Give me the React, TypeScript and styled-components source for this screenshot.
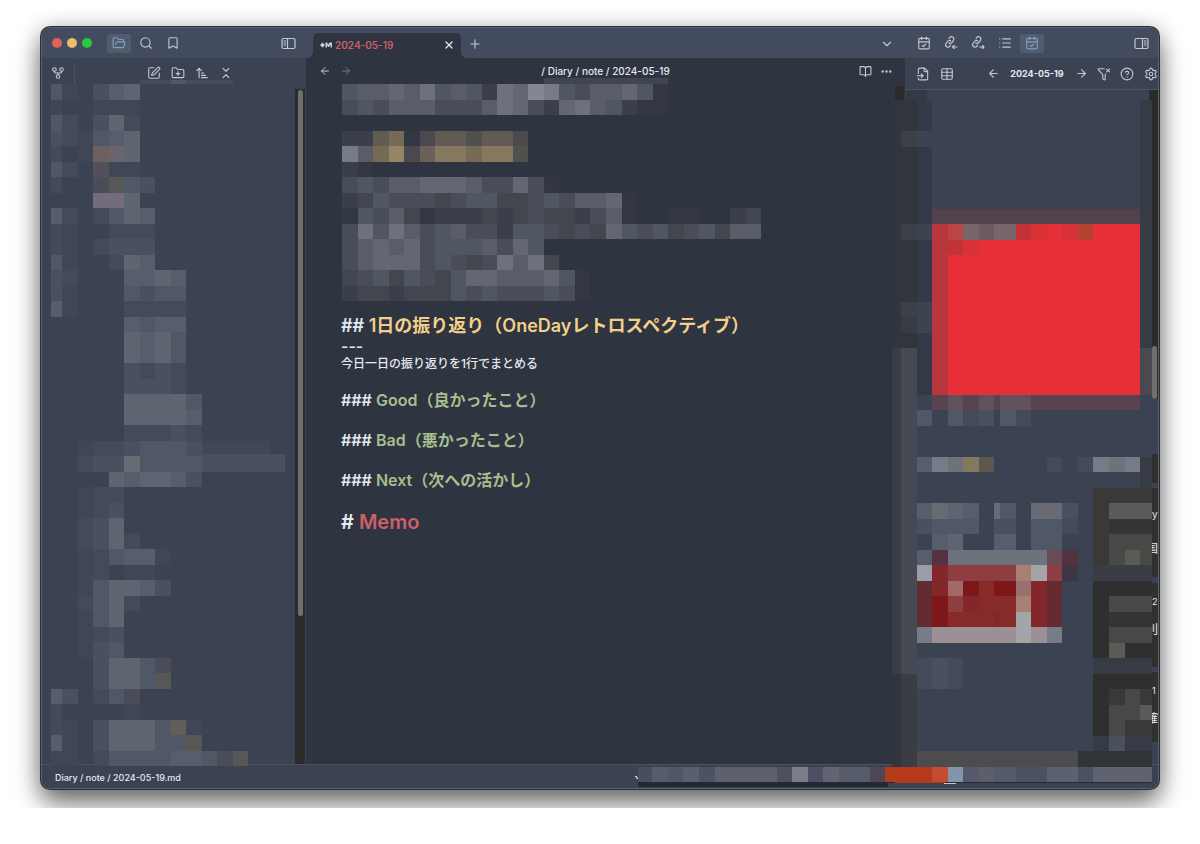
import React from "react";
import styled, { createGlobalStyle, css } from "styled-components";
import {
  ArrowLeft,
  ArrowRight,
  ArrowUpNarrowWide,
  Bookmark,
  BookOpen,
  CalendarCheck,
  ChevronDown,
  ChevronsDownUp,
  CircleHelp,
  Ellipsis,
  FileInput,
  FilterX,
  FolderOpen,
  FolderPlus,
  GitFork,
  List,
  Plus,
  Search,
  Settings,
  SquarePen,
  Table,
  X,
} from "lucide-react";

const color = {
  bar: "#434c5e",
  panel: "#3b4252",
  editor: "#2e3440",
  line: "#4a5265",
  text: "#e5e9f0",
  icon: "#c3c8d1",
  accent: "#81a1c1",
  red: "#cd6069",
  yellow: "#f2d08a",
  green: "#a6bf8e",
  track: "#2b2b29",
  thumb: "#6e6f6f",
};

const GlobalStyle = createGlobalStyle`
  * { box-sizing: border-box; }
  body {
    margin: 0;
    background: #fff;
    color: ${color.text};
    font-family: Inter, "Noto Sans CJK JP", sans-serif;
    font-size: 12px;
  }
`;

/* ---------- window frame ---------- */

const Stage = styled.div`
  display: flex;
  height: calc(100vh - 36px);
  min-height: 600px;
  padding: 27px 41px 19px;
  overflow: hidden;
`;

const Window = styled.div`
  display: flex;
  flex: 1;
  flex-direction: column;
  min-width: 0;
  overflow: hidden;
  border: 1px solid #596174;
  border-radius: 9px;
  background: ${color.panel};
  box-shadow:
    0 0 0 1px #2b2e36,
    0 14px 26px rgba(0, 0, 0, 0.55),
    0 0 22px rgba(0, 0, 0, 0.2);
`;

const Body = styled.div`
  display: grid;
  flex: 1;
  grid-template-columns: 264px 1fr 253px;
  min-height: 0;
`;

const Pane = styled.section<{ $side?: "left" | "right" }>`
  display: flex;
  position: relative;
  flex-direction: column;
  min-width: 0;
  min-height: 0;
  background: ${(p) => (p.$side ? color.panel : color.editor)};
  ${(p) => p.$side === "right" && css`z-index: 1;`}
`;

const Header = styled.header<{ $left: number; $right: number }>`
  display: flex;
  align-items: center;
  flex: none;
  gap: 3px;
  height: 30px;
  padding: 0 ${(p) => p.$right}px 0 ${(p) => p.$left}px;
  background: ${color.bar};
`;

const Toolbar = styled.div<{ $height: number; $left: number; $right: number }>`
  display: flex;
  align-items: center;
  flex: none;
  height: ${(p) => p.$height}px;
  padding: 0 ${(p) => p.$right}px 0 ${(p) => p.$left}px;
`;

const Spacer = styled.div`
  flex: 1;
`;

const IconButton = styled.button<{ $active?: boolean; $dim?: boolean; $w?: number }>`
  display: flex;
  align-items: center;
  justify-content: center;
  flex: none;
  width: ${(p) => p.$w ?? 24}px;
  height: 19px;
  padding: 0;
  border: 0;
  border-radius: 3px;
  background: ${(p) => (p.$active ? "#535c6c" : "transparent")};
  color: ${(p) => (p.$active ? color.accent : color.icon)};
  opacity: ${(p) => (p.$dim ? 0.5 : 1)};
`;

const Lights = styled.div`
  display: flex;
  gap: 5px;
  margin-right: 12px;
`;

const Light = styled.button<{ $fill: string }>`
  width: 10px;
  height: 10px;
  padding: 0;
  border: 0;
  border-radius: 50%;
  background: ${(p) => p.$fill};
`;

const Divider = styled.div`
  width: 1px;
  height: 22px;
  margin: 0 67px 0 4px;
  background: ${color.line};
`;

/* ---------- tabs ---------- */

const TabBar = styled(Header)`
  align-items: flex-end;
  gap: 0;
`;

const Tab = styled.div`
  display: flex;
  position: relative;
  align-items: center;
  width: 148px;
  height: 25px;
  padding: 0 6px 2px 7px;
  border-radius: 5px 5px 0 0;
  background: ${color.editor};
  color: ${color.red};
  font-size: 10px;
  font-weight: 600;

  &::before,
  &::after {
    content: "";
    position: absolute;
    bottom: 0;
    width: 6px;
    height: 6px;
  }
  &::before {
    left: -6px;
    background: radial-gradient(circle at 0 0, transparent 6px, ${color.editor} 6px);
  }
  &::after {
    right: -6px;
    background: radial-gradient(circle at 100% 0, transparent 6px, ${color.editor} 6px);
  }
`;

const TabIcon = styled.svg`
  margin-right: 3px;
`;

const TabSlot = styled.div`
  display: flex;
  align-items: center;
  height: 28px;
  padding-left: 2px;
`;

const Crumbs = styled.div`
  flex: 1;
  text-align: center;
  font-size: 10px;
  font-weight: 500;
  white-space: pre;
`;

const DayNav = styled.nav`
  display: flex;
  align-items: center;
  flex: none;
  margin-left: 22px;
`;

const DateLabel = styled.span`
  width: 60px;
  margin: 0 2px;
  text-align: center;
  font-size: 9px;
  font-weight: 700;
`;

/* ---------- editor ---------- */

const Note = styled.article`
  flex: 1;
  min-height: 0;
  padding-left: 35px;
`;

const Mark = styled.span`
  color: ${color.text};
`;

const H1 = styled.h1`
  margin: 13px 0 0;
  color: ${color.red};
  font-size: 20px;
  font-weight: 600;
  line-height: 32px;
`;

const H2 = styled.h2`
  margin: 14px 0 0;
  color: ${color.yellow};
  font-size: 18px;
  font-weight: 600;
  line-height: 22px;
`;

const H3 = styled.h3`
  margin: 14px 0 0;
  color: ${color.green};
  font-size: 16px;
  font-weight: 600;
  line-height: 26px;
`;

const Line = styled.p<{ $rule?: boolean }>`
  margin: 0;
  font-size: ${(p) => (p.$rule ? 16 : 12)}px;
  font-weight: 500;
  line-height: 18px;
`;

/* ---------- side pane content ---------- */

const FileList = styled.div`
  display: flex;
  flex: 1;
  justify-content: space-between;
  min-height: 0;
`;

const Track = styled.div`
  width: 10px;
  margin: 1px 1px 0 0;
  padding: 1px 2px 0 3px;
  background: ${color.track};
`;

const Thumb = styled.div<{ $height: string }>`
  height: ${(p) => p.$height};
  border-radius: 3px;
  background: ${color.thumb};
`;

const Timeline = styled.div`
  display: flex;
  flex: 1;
  position: relative;
  flex-direction: column;
  align-items: flex-end;
  min-height: 0;
  border-top: 1px solid ${color.line};
`;

const TimelineTrack = styled.div`
  width: 6px;
  height: 309px;
  padding: 256px 1px 0 0;
  background: ${color.track};
`;

const Card = styled.div<{ $height: number; $gap: number; $sliver?: boolean }>`
  flex: none;
  width: ${(p) => (p.$sliver ? 6 : 65)}px;
  height: ${(p) => p.$height}px;
  margin-top: ${(p) => p.$gap}px;
  padding: ${(p) => (p.$sliver ? "0" : "12px 0 0 59px")};
  overflow: hidden;
  background: #31312f;
  white-space: nowrap;
`;

const CardTime = styled.div<{ $small?: boolean }>`
  font-size: ${(p) => (p.$small ? 9 : 10)}px;
  line-height: ${(p) => (p.$small ? 14 : 28)}px;
`;

const CardText = styled.div`
  margin-left: -6px;
  font-size: 12px;
  line-height: 42px;
`;

const Overlay = styled.div`
  position: absolute;
  top: 0;
  left: 0;
  pointer-events: none;
`;

const StatusBar = styled.footer`
  display: flex;
  align-items: center;
  flex: none;
  height: 24px;
  padding: 0 7px 0 13px;
  border-top: 1px solid ${color.line};
  background: ${color.panel};
  font-size: 9px;
  font-weight: 500;
`;

const StatusPath = styled.span`
  padding-top: 2px;
`;

/* ---------- mosaics ---------- */

const MosaicSvg = styled.svg`
  display: block;
  flex: none;
  overflow: visible;
`;

type Rect = [x: number, y: number, w: number, h: number, fill: string];

type MosaicProps = {
  width: number;
  height: number;
  /** left edges of the columns, with one closing edge */
  edges: number[];
  top: number;
  rows: string[];
  palette: Record<string, string>;
  extra?: Rect[];
};

const COL = 15.53;
const ROW = 15.5;

function Mosaic({ width, height, edges, top, rows, palette, extra = [] }: MosaicProps) {
  return (
    <MosaicSvg width={width} height={height} shapeRendering="crispEdges" aria-hidden="true">
      {extra.map(([x, y, w, h, fill], i) => (
        <rect key={`e${i}`} x={x} y={y} width={w} height={h} fill={fill} />
      ))}
      {rows.flatMap((row, r) => {
        const y = Math.round(top + r * ROW);
        const y2 = Math.round(top + (r + 1) * ROW);
        return Array.from(row).map((ch, c) =>
          palette[ch] && c + 1 < edges.length ? (
            <rect
              key={`${r}-${c}`}
              x={edges[c]}
              y={y}
              width={edges[c + 1] - edges[c]}
              height={y2 - y}
              fill={palette[ch]}
            />
          ) : null,
        );
      })}
    </MosaicSvg>
  );
}

const evenEdges = (start: number, n: number) =>
  Array.from({ length: n + 1 }, (_, i) => Math.round(start + i * COL));

const slate = {
  a: "#3f4656",
  b: "#444a5a",
  c: "#4a5060",
  d: "#505867",
  e: "#575d6c",
  f: "#5f6471",
  g: "#686b74",
};

const leftPalette = {
  ...slate,
  h: "#4a4d58",
  i: "#575856",
  R: "#6d6060",
  r: "#69656c",
  q: "#52505b",
  p: "#746c7a",
  Y: "#615e59",
};

const leftRows = [
  "da.cef",
  "a..aaa",
  "db.cfb",
  "cbadef",
  "b.aRrf",
  "db.qaa",
  "b..hidc",
  "...ppf",
  "eb.bdfe",
  "ba..bbb",
  "ba.bccc",
  "da..bfe",
  "cb...eefe",
  "ca...dcdd",
  "ea...bbbb",
  ".....edee",
  ".....fefd",
  ".....fefd",
  ".....cbcb",
  ".....cccb",
  ".....ffffd",
  ".....ffffe",
  ".....bbbcb",
  "..abbcdddc",
  "..bccgdddd",
  "....feffec",
  "..abb",
  "..abc",
  "..bcf",
  "..bcfb",
  "..abdeea",
  "..ab.aa",
  "..adffec",
  "..bdfb",
  "..adf",
  "..abc",
  "..acd",
  "...cffdh",
  "...cffdi",
  "ec.bdh",
  "b....a",
  "ba.cfffdYa",
  "ea.cfffddi",
  "aa.bddddeedhi",
];

const leftEdges = [9, ...evenEdges(20, 13)];

const notePalette = {
  "0": "#333744",
  "1": "#3b3f4b",
  "2": "#42464f",
  "3": "#494d58",
  "4": "#505761",
  "5": "#595d68",
  "6": "#636771",
  "7": "#6e707b",
  "8": "#777a87",
  "9": "#838795",
  z: "#4b494d",
  u: "#50514f",
  y: "#605b53",
  n: "#6b6158",
  m: "#756a56",
  Y: "#85785f",
  Z: "#978464",
};

const noteRows = [
  "455657454176984355640",
  "343555333576316754100",
  "",
  "11ym0zyyuyyz",
  "85mZznYYmYYu",
  "10",
  "34355666533630",
  "1243332344223435560",
  "0435201112123221350..00..12",
  "374753453314432326434234255",
  "3565634445364",
  "35666343237572",
  "2342432466555640",
  "1221222434333430",
];

const rightEdges = [
  -13, -4, 12, 27, 43, 58, 74, 89, 95, 111, 126, 142, 157, 173, 188, 204, 220, 235, 247,
];

const rightPalette = {
  ...slate,
  A: "#31353c",
  B: "#333947",
  C: "#363b45",
  D: "#3c4149",
  E: "#3e4351",
  F: "#444953",
  G: "#393e45",
  H: "#4a4951",
  R: "#e62f36",
  S: "#b8373d",
  T: "#51424c",
  U: "#58434f",
  V: "#5f525b",
  1: "#bb4542",
  2: "#76656a",
  3: "#6f5960",
  4: "#c23338",
  5: "#d83138",
  6: "#b5422f",
  7: "#777b88",
  8: "#6e727d",
  Y: "#83795f",
  y: "#5c584f",
  k: "#999ca9",
  l: "#a4a5a7",
  m: "#8e3e40",
  n: "#a97f74",
  o: "#83272a",
  p: "#632a32",
  q: "#7e1717",
  r: "#a16a69",
  s: "#862a2a",
  t: "#977170",
  u: "#9a9095",
  v: "#553240",
  w: "#674c58",
  x: "#3d3548",
  K: "#3a3938",
  L: "#5a5a59",
  M: "#343434",
  N: "#484846",
  O: "#2f2f2f",
  P: "#5b5a55",
  Q: "#3a3e44",
  X: "#4c4c4e",
  W: "#303436",
};

const rightRows = [
  "AAB..............C",
  "AAB..............C",
  "ADE..............C",
  "AAB..............C",
  "AAB..............C",
  "AAB..............C",
  "AAB..............C",
  "AABTTTTTTTTTTTTTTC",
  "ADES1232245R56RRRC",
  "AABS45RRRRRRRRRRRC",
  "AABSRRRRRRRRRRRRRC",
  "AABSRRRRRRRRRRRRRC",
  "AABSRRRRRRRRRRRRRC",
  "ADESRRRRRRRRRRRRRC",
  "ACESRRRRRRRRRRRRRC",
  "AABSRRRRRRRRRRRRRC",
  "GFBSRRRRRRRRRRRRRH",
  "GFBSRRRRRRRRRRRRRH",
  "GFBSRRRRRRRRRRRRRH",
  "GF.UVUVUVVUUUUUUU",
  "GFd.dbc.db",
  "GF",
  "GF",
  "GFe78Yy....b.b787C",
  "GF...h...........C",
  "GF............KKKK",
  "GFegfe.gd.ggc.KLLL",
  "GFcddd.cc.ddb.KMMM",
  "GF.ef..ee.dd..KNNN",
  "GFev8888888wv.KNPN",
  "GFkommmmmnlmx.QQQQ",
  "GFporqsqqtop..OOOO",
  "GFpqmosssnop..ONNN",
  "GFpqsssoslop..OMMM",
  "GF7uuuuuulu7..ONNN",
  "GF............OPOO",
  "GFbcb.........CCCC",
  "AGbcb.........OOOO",
  "AG............OKNK",
  "AG............ONNL",
  "AG............ONKK",
  "AG............CcCC",
  "AQXXXXXXXXXXXWWWWW",
];

const statusCells: [w: number, fill: string][] = [
  [14, "#484e5f"],
  [16, "#575c6b"],
  [15, "#505666"],
  [16, "#5a5f6d"],
  [16, "#4c5262"],
  [62, "#5d616e"],
  [15, "#4b5161"],
  [16, "#7b7e89"],
  [15, "#4b5162"],
  [16, "#606571"],
  [31, "#575c6a"],
  [15, "#4f4653"],
  [47, "#b53a1b"],
  [16, "#c54b34"],
  [15, "#8394ab"],
  [16, "#545a6b"],
  [15, "#5c5e6b"],
  [22, "#545a6a"],
  [31, "#4b5163"],
  [31, "#5b6171"],
  [15, "#4c5264"],
  [59, "#5f6370"],
];

function StatusMosaic() {
  let x = 3;
  return (
    <MosaicSvg width={516} height={23} shapeRendering="crispEdges" aria-hidden="true">
      <rect x={0} y={11} width={2} height={1} fill="#cfd3da" />
      <rect x={1} y={12} width={2} height={2} fill="#aeb3bd" />
      <rect x={3} y={16} width={250} height={6} fill="#262935" />
      <rect x={253} y={17} width={263} height={1} fill="#262935" />
      {statusCells.map(([w, fill], i) => {
        const cell = <rect key={i} x={x} y={2} width={w} height={15} fill={fill} />;
        x += w;
        return cell;
      })}
      <rect x={260} y={17} width={50} height={1} fill="#b53a1b" />
      <rect x={309} y={18} width={12} height={1} fill="#c5c8cf" />
    </MosaicSvg>
  );
}

/* ---------- icons the package has no match for ---------- */

function SidebarIcon({ flip = false }: { flip?: boolean }) {
  return (
    <svg width="15" height="13" viewBox="0 0 30 26" fill="none" stroke="currentColor" strokeWidth="2.4">
      <g transform={flip ? "translate(30 0) scale(-1 1)" : undefined}>
        <rect x="2" y="3" width="26" height="20" rx="3" />
        <path d="M13 3v20" />
        <path d="M5 8h5M5 12h5M5 16h5" strokeWidth="2" />
      </g>
    </svg>
  );
}

function LinkArrow({ out = false }: { out?: boolean }) {
  return (
    <svg
      width="14"
      height="14"
      viewBox="0 0 28 28"
      fill="none"
      stroke="currentColor"
      strokeWidth="2.3"
      strokeLinecap="round"
      strokeLinejoin="round"
    >
      <g transform="rotate(-12 12 12)">
        <path d="M9 13a4.500 4.500 0 0 0 7 .5l3.600-3.600a4.600 4.600 0 0 0-6.500-6.500l-1.800 1.800" />
        <path d="M14 10.500a4.500 4.500 0 0 0-7-.5l-3.600 3.600a4.600 4.600 0 0 0 6.500 6.500l1.800-1.800" />
      </g>
      {out ? <path d="M17 22h9M23 19l3 3-3 3" /> : <path d="M26 22h-9M20 19l-3 3 3 3" />}
    </svg>
  );
}

const ico = { size: 14, strokeWidth: 1.9 };

export default function App() {
  return (
    <>
      <GlobalStyle />
      <Stage>
        <Window>
          <Body>
            <Pane $side="left" aria-label="Files">
              <Header $left={10} $right={6}>
                <Lights>
                  <Light $fill="#e0605e" aria-label="Close window" />
                  <Light $fill="#e8bd6c" aria-label="Minimize window" />
                  <Light $fill="#28c840" aria-label="Zoom window" />
                </Lights>
                <IconButton $active aria-label="Files"><FolderOpen {...ico} /></IconButton>
                <IconButton aria-label="Search"><Search {...ico} /></IconButton>
                <IconButton aria-label="Bookmarks"><Bookmark {...ico} /></IconButton>
                <Spacer />
                <IconButton aria-label="Toggle left sidebar"><SidebarIcon /></IconButton>
              </Header>
              <Toolbar $height={30} $left={4} $right={0}>
                <IconButton aria-label="Graph"><GitFork {...ico} /></IconButton>
                <Divider />
                <IconButton aria-label="New note"><SquarePen {...ico} /></IconButton>
                <IconButton aria-label="New folder"><FolderPlus {...ico} /></IconButton>
                <IconButton aria-label="Sort order"><ArrowUpNarrowWide {...ico} /></IconButton>
                <IconButton aria-label="Collapse all"><ChevronsDownUp {...ico} /></IconButton>
              </Toolbar>
              <FileList>
                <Mosaic
                  width={245}
                  height={600}
                  edges={leftEdges}
                  top={-4}
                  rows={leftRows}
                  palette={leftPalette}
                  extra={[
                    [98, -8, 93, 4, "#454b5b"],
                    [129, -8, 15, 4, "#50576a"],
                    [160, 353, 68, 16, "#414757"],
                    [160, 366, 83, 18, "#4a5060"],
                  ]}
                />
                <Track><Thumb $height="78%" /></Track>
              </FileList>
            </Pane>

            <Pane aria-label="Note">
              <TabBar $left={7} $right={6}>
                <Tab>
                  <TabIcon width="12" height="8" viewBox="0 0 24 16" fill="#c9cdd5" aria-hidden="true">
                    <path d="M0 8l5-5 5 5-5 5zM11 3h3l2.500 4L19 3h5v10h-3V7l-3 5h-2l-2-4v5h-3z" />
                  </TabIcon>
                  2024-05-19
                  <Spacer />
                  <IconButton $w={12} aria-label="Close tab"><X size={12} strokeWidth={2.6} color="#e5e9f0" /></IconButton>
                </Tab>
                <TabSlot><IconButton aria-label="New tab"><Plus {...ico} /></IconButton></TabSlot>
                <Spacer />
                <TabSlot><IconButton aria-label="Tab list"><ChevronDown size={14} strokeWidth={2} /></IconButton></TabSlot>
              </TabBar>
              <Toolbar $height={26} $left={8} $right={8}>
                <IconButton $w={21} aria-label="Back"><ArrowLeft size={12} /></IconButton>
                <IconButton $w={21} $dim aria-label="Forward"><ArrowRight size={12} /></IconButton>
                <Crumbs>/ Diary / note / 2024-05-19</Crumbs>
                <IconButton $w={21} aria-label="Reading view"><BookOpen size={13} /></IconButton>
                <IconButton $w={21} aria-label="More options"><Ellipsis size={13} strokeWidth={2.4} /></IconButton>
              </Toolbar>
              <Note>
                <Mosaic
                  width={422}
                  height={217}
                  edges={evenEdges(1, 27)}
                  top={0}
                  rows={noteRows}
                  palette={notePalette}
                  extra={[[203, -6, 124, 6, "#41454f"]]}
                />
                <H2><Mark>##</Mark> 1日の振り返り（OneDayレトロスペクティブ）</H2>
                <Line $rule>---</Line>
                <Line>今日一日の振り返りを1行でまとめる</Line>
                <H3><Mark>###</Mark> Good（良かったこと）</H3>
                <H3><Mark>###</Mark> Bad（悪かったこと）</H3>
                <H3><Mark>###</Mark> Next（次への活かし）</H3>
                <H1><Mark>#</Mark> Memo</H1>
              </Note>
            </Pane>

            <Pane $side="right" aria-label="Timeline">
              <Header $left={7} $right={5}>
                <IconButton aria-label="Calendar"><CalendarCheck {...ico} /></IconButton>
                <IconButton aria-label="Backlinks"><LinkArrow /></IconButton>
                <IconButton aria-label="Outgoing links"><LinkArrow out /></IconButton>
                <IconButton aria-label="Outline"><List {...ico} /></IconButton>
                <IconButton $active aria-label="Day planner"><CalendarCheck {...ico} /></IconButton>
                <Spacer />
                <IconButton aria-label="Toggle right sidebar"><SidebarIcon flip /></IconButton>
              </Header>
              <Toolbar $height={31} $left={6} $right={0}>
                <IconButton aria-label="Open daily note"><FileInput {...ico} /></IconButton>
                <IconButton aria-label="Columns"><Table {...ico} /></IconButton>
                <DayNav aria-label="Day">
                  <IconButton aria-label="Previous day"><ArrowLeft size={13} /></IconButton>
                  <DateLabel>2024-05-19</DateLabel>
                  <IconButton aria-label="Next day"><ArrowRight size={13} /></IconButton>
                </DayNav>
                <IconButton $w={22} aria-label="Clear filter"><FilterX {...ico} /></IconButton>
                <IconButton aria-label="Help"><CircleHelp {...ico} /></IconButton>
                <IconButton aria-label="Settings"><Settings {...ico} /></IconButton>
              </Toolbar>
              <Timeline>
                <TimelineTrack><Thumb $height="53px" /></TimelineTrack>
                <Card $sliver $height={29} $gap={55} />
                <Card $height={89} $gap={5}>
                  <CardTime>y</CardTime>
                  <CardText>国</CardText>
                </Card>
                <Card $height={84} $gap={6}>
                  <CardTime $small>2</CardTime>
                  <CardText>則</CardText>
                </Card>
                <Card $height={70} $gap={5}>
                  <CardTime $small>1</CardTime>
                  <CardText>確</CardText>
                </Card>
                <Overlay>
                  <Mosaic
                    width={247}
                    height={600}
                    edges={rightEdges}
                    top={10}
                    rows={rightRows}
                    palette={rightPalette}
                    extra={[
                      [-10, -4, 9, 15, "#2b2b29"],
                      [1, 0, 21, 10, "#333947"],
                      [244, 0, 3, 10, "#2b2b29"],
                    ]}
                  />
                </Overlay>
              </Timeline>
            </Pane>
          </Body>
          <StatusBar>
            <StatusPath>Diary / note / 2024-05-19.md</StatusPath>
            <Spacer />
            <StatusMosaic />
          </StatusBar>
        </Window>
      </Stage>
    </>
  );
}
